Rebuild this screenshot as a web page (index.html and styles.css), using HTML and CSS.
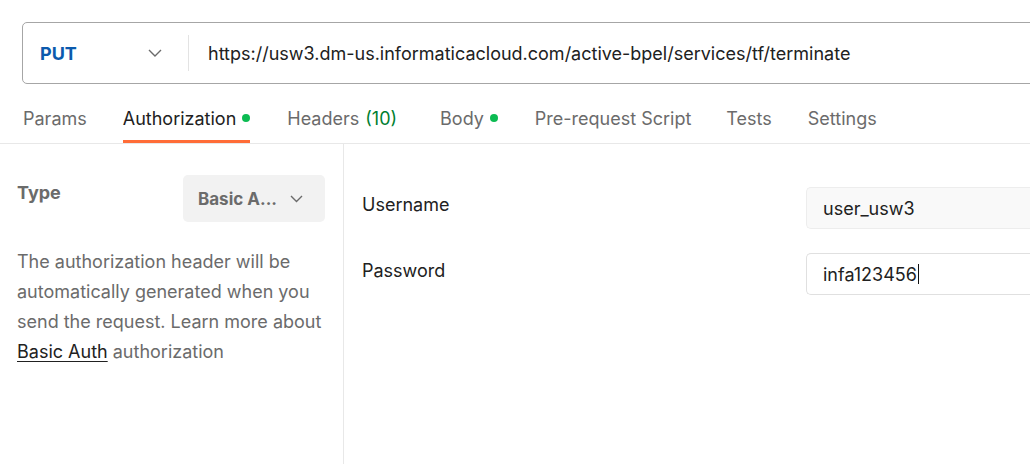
FILE: index.html
```html
<!DOCTYPE html>
<html>
<head>
<meta charset="utf-8">
<link rel="stylesheet" href="styles.css">
</head>
<body>
<div class="page">
  <div class="urlbar">
    <div class="method">
      <span class="method-name">PUT</span>
      <svg class="chev" width="14" height="8" viewBox="0 0 14 8"><path d="M1 1l6 6 6-6" fill="none" stroke="#6b6b6b" stroke-width="1.4"/></svg>
    </div>
    <div class="sep"></div>
    <div class="url">https://usw3.dm-us.informaticacloud.com/active-bpel/services/tf/terminate</div>
  </div>
  <div class="tabs">
    <div class="tab params">Params</div>
    <div class="tab active">Authorization<span class="dot"></span></div>
    <div class="tab headers">Headers <span class="count">(10)</span></div>
    <div class="tab">Body<span class="dot"></span></div>
    <div class="tab prereq">Pre-request Script</div>
    <div class="tab tests">Tests</div>
    <div class="tab">Settings</div>
  </div>
  <div class="content">
    <div class="left">
      <div class="type-row">
        <div class="type-label">Type</div>
        <div class="select">
          <span>Basic A...</span>
          <svg width="13" height="8" viewBox="0 0 13 8"><path d="M1 1l5.5 5.5L12 1" fill="none" stroke="#6b6b6b" stroke-width="1.4"/></svg>
        </div>
      </div>
      <p class="desc">The authorization header will be automatically generated when you send the request. Learn more about <a class="link">Basic Auth</a> authorization</p>
    </div>
    <div class="right">
      <div class="field">
        <div class="flabel">Username</div>
        <div class="input filled">user_usw3</div>
      </div>
      <div class="field">
        <div class="flabel">Password</div>
        <div class="input focus">infa123456<span class="caret"></span></div>
      </div>
    </div>
  </div>
</div>
</body>
</html>
```

FILE: styles.css
```css
html, body {
  margin: 0;
  padding: 0;
  background: #ffffff;
  overflow: hidden;
}
body {
  font-family: Inter, "Noto Sans", sans-serif;
  color: #212121;
  width: 1030px;
  height: 464px;
}
.page {
  width: 1030px;
  height: 464px;
  overflow: hidden;
}
.urlbar {
  margin: 22px 0 0 22px;
  width: 1040px;
  height: 60px;
  border: 1px solid #a6a6a6;
  border-radius: 5px;
  display: flex;
  align-items: center;
  box-sizing: content-box;
}
.method {
  width: 122px;
  padding-left: 17px;
  display: flex;
  align-items: center;
  justify-content: space-between;
  box-sizing: content-box;
}
.method-name {
  font-weight: 700;
  font-size: 18px;
  color: #0b5aad;
}
.sep {
  width: 1px;
  height: 36px;
  background: #e3e3e3;
  margin-left: 26px;
}
.url {
  margin-left: 19px;
  font-size: 18px;
  color: #212121;
  white-space: nowrap;
}
.tabs {
  display: flex;
  height: 60px;
  padding-left: 23px;
  border-bottom: 1px solid #e8e8e8;
  box-sizing: border-box;
}
.tab {
  font-size: 18px;
  color: #6b6b6b;
  display: flex;
  align-items: center;
  padding-top: 12px;
  margin-right: 37px;
  border-bottom: 3px solid transparent;
  white-space: nowrap;
}
.tab.params {
  margin-right: 36px;
}
.tab.headers {
  margin-right: 43px;
}
.tab.prereq {
  margin-right: 35px;
}
.tab.tests {
  margin-right: 36px;
}
.tab.active {
  color: #212121;
  border-bottom-color: #ff6c37;
}
.dot {
  display: inline-block;
  width: 8px;
  height: 8px;
  border-radius: 50%;
  background: #0cbb52;
  margin-left: 6px;
}
.count {
  color: #007f31;
  margin-left: 6px;
}
.content {
  display: flex;
  height: 320px;
}
.left {
  width: 344px;
  border-right: 1px solid #e8e8e8;
  padding: 31px 18px 0 17px;
  box-sizing: border-box;
}
.type-row {
  display: flex;
  justify-content: space-between;
  align-items: flex-start;
}
.type-label {
  font-weight: 700;
  font-size: 18px;
  color: #6b6b6b;
  margin-top: 7px;
}
.select {
  width: 142px;
  height: 47px;
  background: #f2f2f2;
  border-radius: 5px;
  display: flex;
  align-items: center;
  justify-content: space-between;
  padding: 0 22px 0 15px;
  box-sizing: border-box;
  font-weight: 700;
  font-size: 17px;
  color: #6b6b6b;
}
.desc {
  margin: 25px 0 0 0;
  font-size: 18px;
  line-height: 30px;
  color: #6b6b6b;
}
.link {
  color: #212121;
  text-decoration: underline;
  text-underline-offset: 3px;
}
.right {
  flex: 1;
  padding: 43px 0 0 18px;
}
.field {
  display: flex;
  align-items: center;
  margin-bottom: 24px;
}
.flabel {
  width: 444px;
  font-size: 18px;
  color: #212121;
  margin-top: -8px;
}
.input {
  flex: 1;
  height: 42px;
  border: 1px solid #e6e6e6;
  border-right: none;
  border-radius: 5px 0 0 5px;
  box-sizing: border-box;
  padding-left: 16px;
  display: flex;
  align-items: center;
  font-size: 18px;
  color: #212121;
}
.input.filled {
  background: #f9f9f9;
  border-color: #ededed;
}
.input.focus {
  background: #ffffff;
  border-color: #e0e0e0;
}
.caret {
  display: inline-block;
  width: 1px;
  height: 20px;
  background: #111;
  margin-left: 1px;
}
```
